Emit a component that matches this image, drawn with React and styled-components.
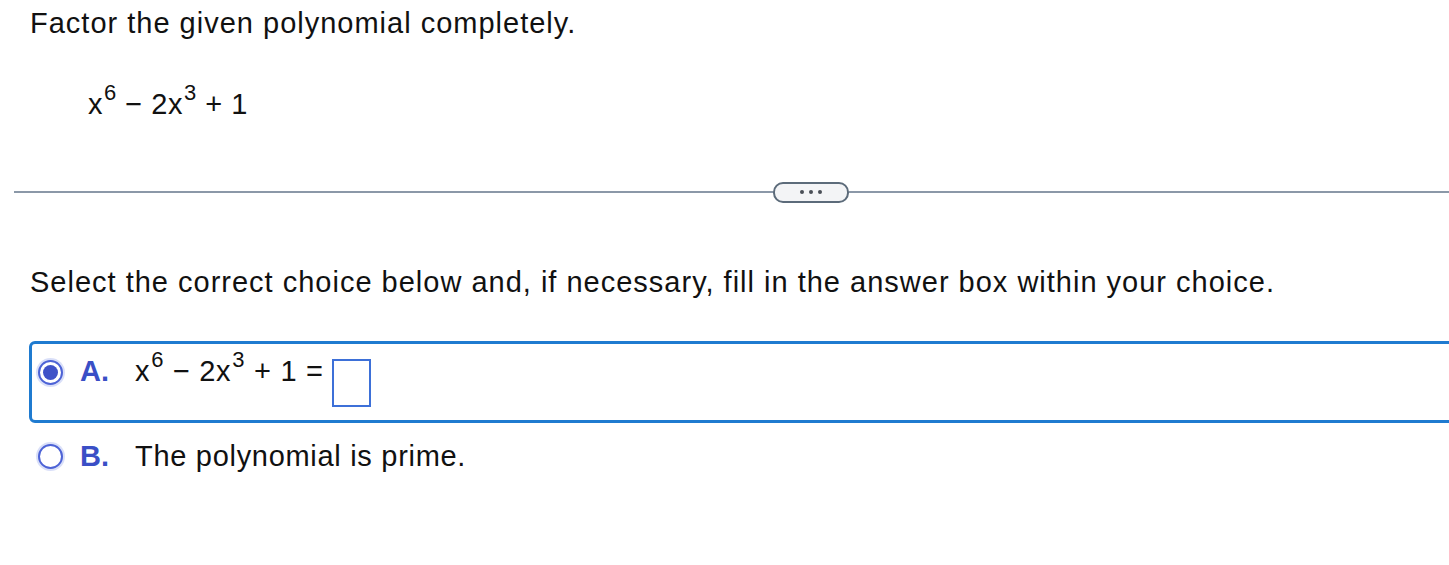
import React from "react";
import styled, { createGlobalStyle } from "styled-components";

const GlobalStyle = createGlobalStyle`
  body {
    margin: 0;
    background: #ffffff;
    font-family: "Liberation Sans", Arial, sans-serif;
    color: #111;
    overflow: hidden;
  }
`;

const Page = styled.div`
  width: 1449px;
  height: 565px;
  overflow: hidden;
`;

const Question = styled.div`
  padding: 6px 0 0 30px;
`;

const Prompt = styled.div`
  font-size: 29px;
  letter-spacing: 1px;
  line-height: 34px;
`;

const Expression = styled.div`
  margin: 44px 0 0 58px;
  font-size: 29px;
  letter-spacing: 0.5px;
  line-height: 40px;
`;

const Sup = styled.sup`
  font-size: 22px;
  vertical-align: 0;
  position: relative;
  top: -14px;
  margin-left: 1px;
`;

const Divider = styled.div`
  display: flex;
  align-items: center;
  margin: 54px 0 0 14px;
  height: 22px;
`;

const Line = styled.div`
  height: 2px;
  background: #8b98a8;
  flex: ${(p) => (p.$grow ? 1 : "none")};
  width: ${(p) => (p.$width ? `${p.$width}px` : "auto")};
`;

const Pill = styled.div`
  width: 72px;
  height: 17px;
  border: 2px solid #5c6b7a;
  border-radius: 10px;
  background: #f3f4f6;
  display: flex;
  align-items: center;
  justify-content: center;
  gap: 5px;
`;

const Dot = styled.span`
  width: 4px;
  height: 4px;
  border-radius: 50%;
  background: #4a4f57;
`;

const Instruction = styled.div`
  margin: 62px 0 0 30px;
  font-size: 29px;
  letter-spacing: 1px;
  line-height: 34px;
`;

const Choices = styled.div`
  margin: 42px 0 0 29px;
  display: flex;
  flex-direction: column;
`;

const Choice = styled.div`
  display: flex;
  align-items: ${(p) => (p.$selected ? "flex-start" : "center")};
  height: ${(p) => (p.$selected ? "66px" : "auto")};
  padding-top: ${(p) => (p.$selected ? "10px" : "0")};
  width: 1440px;
  box-sizing: content-box;
  border: 3px solid ${(p) => (p.$selected ? "#1f7bd0" : "transparent")};
  border-radius: 6px;
  padding-left: 6px;
  margin-top: ${(p) => (p.$selected ? "0" : "13px")};
  line-height: 34px;
`;

const Radio = styled.span`
  width: 21px;
  height: 21px;
  border-radius: 50%;
  border: 2px solid #4d63d6;
  box-shadow: 0 0 0 2px rgba(120, 140, 230, 0.28);
  display: flex;
  align-items: center;
  justify-content: center;
  flex: none;
  background: #fff;
  margin-top: ${(p) => (p.$checked ? "6px" : "0")};
  &::after {
    content: "";
    width: 15px;
    height: 15px;
    border-radius: 50%;
    background: ${(p) => (p.$checked ? "#3f52c8" : "transparent")};
  }
`;

const Letter = styled.span`
  font-weight: bold;
  color: #3a4fc6;
  font-size: 29px;
  margin-left: 17px;
  width: 55px;
  flex: none;
`;

const ChoiceText = styled.span`
  font-size: 29px;
  letter-spacing: 0.7px;
  display: flex;
  align-items: flex-start;
`;

const AnswerBox = styled.span`
  display: inline-block;
  width: 35px;
  height: 44px;
  border: 2px solid #3d70d8;
  margin-left: 8px;
  margin-top: 5px;
`;

export default function App() {
  return (
    <Page>
      <GlobalStyle />
      <Question>
        <Prompt>Factor the given polynomial completely.</Prompt>
        <Expression>
          x<Sup>6</Sup> − 2x<Sup>3</Sup> + 1
        </Expression>
      </Question>
      <Divider>
        <Line $width={759} />
        <Pill>
          <Dot />
          <Dot />
          <Dot />
        </Pill>
        <Line $grow />
      </Divider>
      <Instruction>
        Select the correct choice below and, if necessary, fill in the answer box within your choice.
      </Instruction>
      <Choices>
        <Choice $selected>
          <Radio $checked />
          <Letter>A.</Letter>
          <ChoiceText>
            <span>
              x<Sup>6</Sup> − 2x<Sup>3</Sup> + 1 =
            </span>
            <AnswerBox />
          </ChoiceText>
        </Choice>
        <Choice>
          <Radio />
          <Letter>B.</Letter>
          <ChoiceText>The polynomial is prime.</ChoiceText>
        </Choice>
      </Choices>
    </Page>
  );
}
